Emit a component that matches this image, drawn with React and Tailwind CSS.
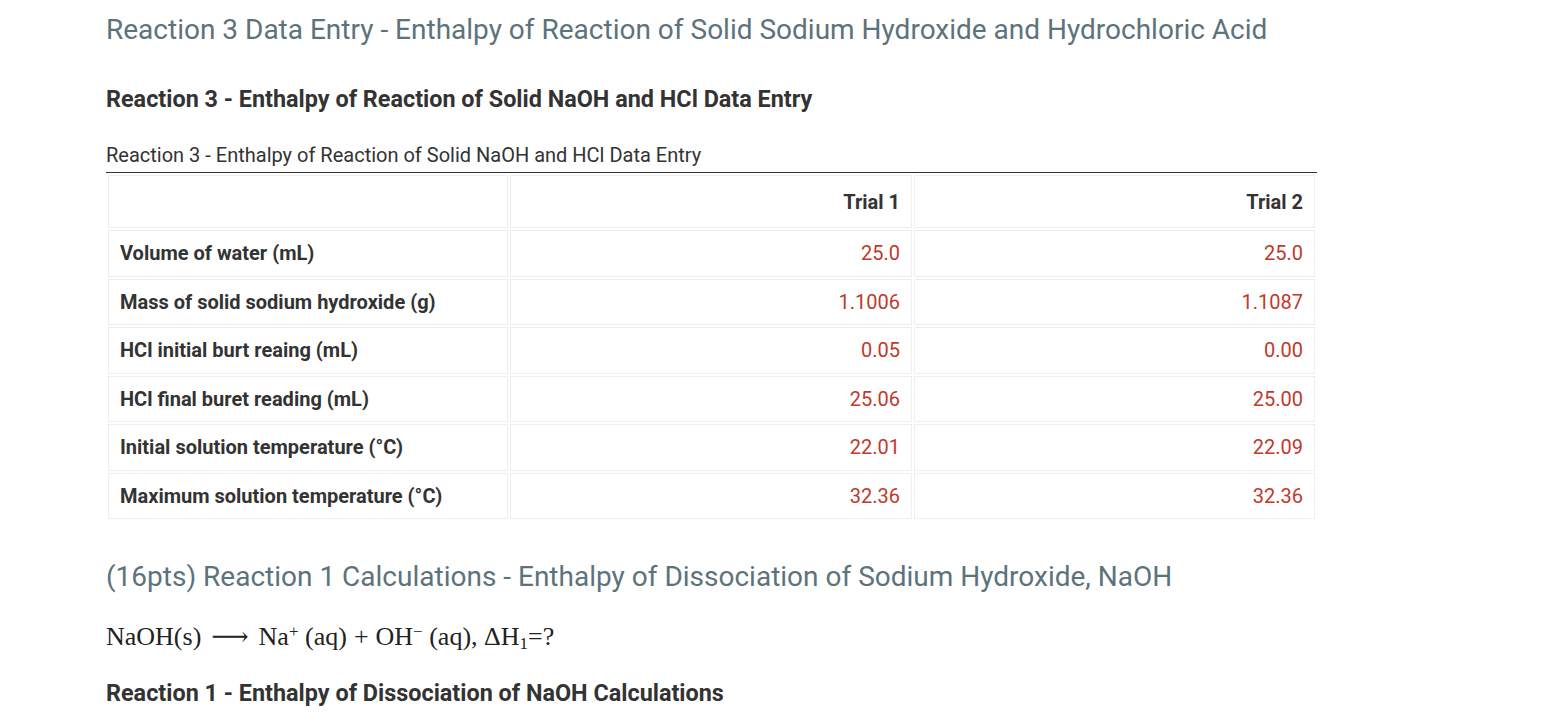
import React from 'react';

const rows = [
  ['Volume of water (mL)', '25.0', '25.0'],
  ['Mass of solid sodium hydroxide (g)', '1.1006', '1.1087'],
  ['HCl initial burt reaing (mL)', '0.05', '0.00'],
  ['HCl final buret reading (mL)', '25.06', '25.00'],
  ['Initial solution temperature (°C)', '22.01', '22.09'],
  ['Maximum solution temperature (°C)', '32.36', '32.36'],
];

function App() {
  return (
    <div className="bg-white min-h-[722px] pl-[106px] pt-[12px] text-[#333]" style={{ fontFamily: 'Roboto, "Liberation Sans", sans-serif' }}>
      <h1 className="text-[28px] leading-[36px] text-[#5c737b] font-normal">
        Reaction 3 Data Entry - Enthalpy of Reaction of Solid Sodium Hydroxide and Hydrochloric Acid
      </h1>
      <h2 className="mt-[37px] text-[23.4px] leading-[28px] font-bold text-[#333]">
        Reaction 3 - Enthalpy of Reaction of Solid NaOH and HCl Data Entry
      </h2>
      <table className="mt-[30px] w-[1211px] border-separate border-spacing-[2px] border-t border-[#333] text-[20px]">
        <caption className="text-left text-[20px] leading-[24px] pb-[5px] text-[#333] font-normal">
          Reaction 3 - Enthalpy of Reaction of Solid NaOH and HCl Data Entry
        </caption>
        <thead>
          <tr>
            <th className="w-[400px] h-[53px] border border-[#eee]"></th>
            <th className="w-[402px] border border-[#eee] text-right pr-[11px] font-bold">Trial 1</th>
            <th className="border border-[#eee] text-right pr-[11px] font-bold">Trial 2</th>
          </tr>
        </thead>
        <tbody>
          {rows.map((r, i) => (
            <tr key={i}>
              <td className="h-[46.5px] border border-[#eee] text-left pl-[11px] font-bold">{r[0]}</td>
              <td className="border border-[#eee] text-right pr-[11px] text-[#c0392b]">{r[1]}</td>
              <td className="border border-[#eee] text-right pr-[11px] text-[#c0392b]">{r[2]}</td>
            </tr>
          ))}
        </tbody>
      </table>
      <h3 className="mt-[38px] text-[28px] leading-[36px] text-[#5c737b] font-normal">
        (16pts) Reaction 1 Calculations - Enthalpy of Dissociation of Sodium Hydroxide, NaOH
      </h3>
      <p className="mt-[27px] text-[26px] leading-[30px] text-[#222]" style={{ fontFamily: '"Liberation Serif", "DejaVu Serif", serif' }}>
        NaOH(s)<span className="mx-[10px]">⟶</span>Na<sup className="text-[17px]">+</sup> (aq)<span className="mx-[7px]">+</span>OH<sup className="text-[17px]">−</sup> (aq), ΔH<sub className="text-[17px]">1</sub>=?
      </p>
      <h2 className="mt-[27px] text-[23.4px] leading-[28px] font-bold text-[#333]">
        Reaction 1 - Enthalpy of Dissociation of NaOH Calculations
      </h2>
    </div>
  );
}

export default App;
